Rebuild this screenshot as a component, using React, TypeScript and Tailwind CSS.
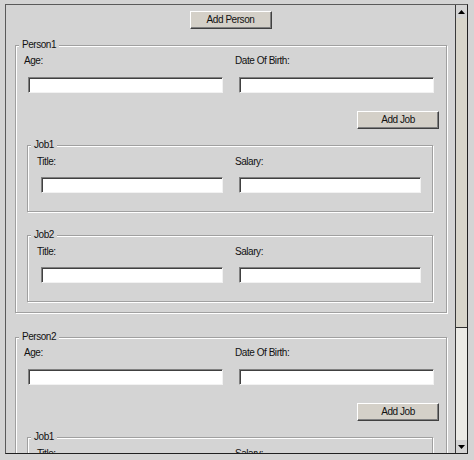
import React from "react";

function Btn({ label, className = "" }: { label: string; className?: string }) {
  return (
    <div
      className={
        "h-[18px] flex items-center justify-center bg-[#d4d0c8] border border-t-white border-l-white border-b-[#404040] border-r-[#404040] shadow-[inset_-1px_-1px_0_#808080] leading-[12px] " +
        className
      }
    >
      {label}
    </div>
  );
}

function Field({ w }: { w: string }) {
  return (
    <div
      className={
        "h-[16px] ml-[4px] bg-white border border-t-[#808080] border-l-[#808080] border-b-[#f2f2f2] border-r-[#f2f2f2] shadow-[inset_1px_1px_0_#404040] " +
        w
      }
    />
  );
}

function Group({
  title,
  className = "",
  children,
}: {
  title: string;
  className?: string;
  children: React.ReactNode;
}) {
  return (
    <div
      className={
        "relative border border-[#a0a0a0] shadow-[inset_1px_1px_0_#ffffff,1px_1px_0_#ffffff] " + className
      }
    >
      <span className="absolute left-[3px] top-[-7px] px-[3px] bg-[#d4d4d4] leading-[12px]">{title}</span>
      {children}
    </div>
  );
}

function Job({ title, className = "" }: { title: string; className?: string }) {
  return (
    <Group title={title} className={"ml-[11px] w-[406px] pt-[10px] pb-[18px] " + className}>
      <div className="flex pl-[9px]">
        <div className="w-[198px] flex flex-col">
          <div className="leading-[12px]">Title:</div>
          <div className="mt-[9px]">
            <Field w="w-[182px]" />
          </div>
        </div>
        <div className="flex flex-col">
          <div className="leading-[12px]">Salary:</div>
          <div className="mt-[9px]">
            <Field w="w-[182px]" />
          </div>
        </div>
      </div>
    </Group>
  );
}

function Person({ title, className = "" }: { title: string; className?: string }) {
  return (
    <Group title={title} className={"ml-[9px] w-[432px] pt-[9px] pb-[10px] flex flex-col " + className}>
      <div className="flex pl-[8px]">
        <div className="w-[211px] flex flex-col">
          <div className="leading-[12px]">Age:</div>
          <div className="mt-[10px]">
            <Field w="w-[195px]" />
          </div>
        </div>
        <div className="flex flex-col">
          <div className="leading-[12px]">Date Of Birth:</div>
          <div className="mt-[10px]">
            <Field w="w-[195px]" />
          </div>
        </div>
      </div>
      <div className="flex justify-end mt-[18px] pr-[7px]">
        <Btn label="Add Job" className="w-[82px]" />
      </div>
      <Job title="Job1" className="mt-[16px]" />
      <Job title="Job2" className="mt-[23px]" />
    </Group>
  );
}

export default function App() {
  return (
    <div className="w-[474px] h-[460px] bg-[#d4d4d4] pt-[4px] pl-[5px] text-[10px] tracking-[-0.45px] text-[#111] font-['Liberation_Sans',Arial,sans-serif] overflow-hidden">
      <div className="w-[463px] h-[450px] border border-t-[#5a5a5a] border-l-[#5a5a5a] border-b-[#202020] border-r-[#202020] flex overflow-hidden">
        <div className="w-[449px] h-full overflow-hidden flex flex-col">
          <div className="flex justify-center mt-[6px]">
            <Btn label="Add Person" className="w-[82px]" />
          </div>
          <Person title="Person1" className="mt-[16px]" />
          <Person title="Person2" className="mt-[24px] shrink-0" />
        </div>
        <div className="w-[12px] h-full flex flex-col border-l border-[#3a3a3a]">
          <div className="h-[13px] bg-[#d4d4d4] flex items-center justify-center">
            <svg width="7" height="4" viewBox="0 0 7 4">
              <polygon points="3.5,0 7,4 0,4" fill="#000" />
            </svg>
          </div>
          <div className="h-[310px] bg-[#d8d5ca] border-b border-[#303030]" />
          <div className="flex-1 bg-[#ecebe6]" />
          <div className="h-[13px] bg-[#d4d4d4] flex items-center justify-center">
            <svg width="7" height="4" viewBox="0 0 7 4">
              <polygon points="0,0 7,0 3.5,4" fill="#000" />
            </svg>
          </div>
        </div>
      </div>
    </div>
  );
}
